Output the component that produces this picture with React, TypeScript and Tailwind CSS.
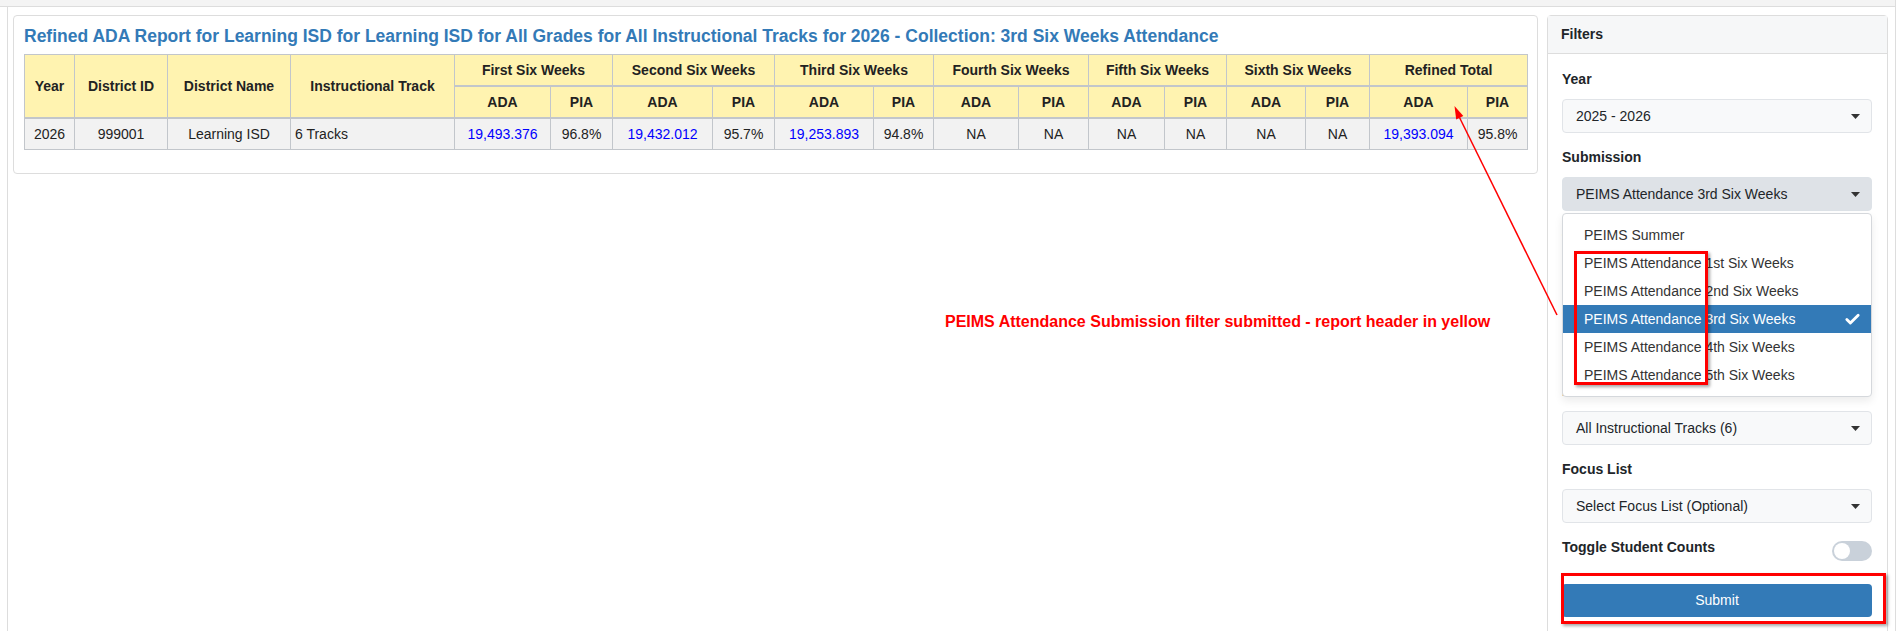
import { Check } from "lucide-react";

const periods = [
  "First Six Weeks",
  "Second Six Weeks",
  "Third Six Weeks",
  "Fourth Six Weeks",
  "Fifth Six Weeks",
  "Sixth Six Weeks",
  "Refined Total",
];

// ADA / PIA pairs, one per period
const row: [string, string][] = [
  ["19,493.376", "96.8%"],
  ["19,432.012", "95.7%"],
  ["19,253.893", "94.8%"],
  ["NA", "NA"],
  ["NA", "NA"],
  ["NA", "NA"],
  ["19,393.094", "95.8%"],
];

const cols = [
  "w-[50px]", "w-[93px]", "w-[123px]", "w-[164px]",
  "w-[96px]", "w-[62px]", "w-[100px]", "w-[62px]", "w-[99px]", "w-[60px]",
  "w-[85px]", "w-[70px]", "w-[76px]", "w-[62px]", "w-[79px]", "w-[64px]",
  "w-[98px]", "w-[60px]",
];

const submissions = [
  "PEIMS Summer",
  "PEIMS Attendance 1st Six Weeks",
  "PEIMS Attendance 2nd Six Weeks",
  "PEIMS Attendance 3rd Six Weeks",
  "PEIMS Attendance 4th Six Weeks",
  "PEIMS Attendance 5th Six Weeks",
];

const th = "border border-[#c2c6cb] border-b-2 bg-[#fff3b0] px-[4px] py-[5px] text-center font-bold text-[#222]";
const td = "border border-[#c2c6cb] bg-[#f2f2f2] px-[4px] py-[5px] text-center";

function Caret() {
  return (
    <svg width="9" height="5" viewBox="0 0 9 5" className="shrink-0">
      <polygon points="0,0 9,0 4.5,5" fill="#333" />
    </svg>
  );
}

function SelectBox({ value, active }: { value: string; active?: boolean }) {
  return (
    <div
      className={`flex h-[34px] w-full items-center justify-between rounded-[4px] border pl-[13px] pr-[11px] text-[14px] text-[#212529] ${
        active ? "border-[#dde2e7] bg-[#dee2e7]" : "border-[#e1e4e8] bg-[#f8f9fa]"
      }`}
    >
      <span>{value}</span>
      <Caret />
    </div>
  );
}

function Field({ label, children }: { label: string; children: React.ReactNode }) {
  return (
    <div className="mb-[14px]">
      <div className="mb-[10px] text-[14px] font-bold leading-[20px] text-[#212529]">{label}</div>
      {children}
    </div>
  );
}

function ReportCard() {
  return (
    <div className="w-[1525px] shrink-0 rounded-[4px] border border-[#dddddd] px-[10px] pt-[10px] pb-[23px]">
      <h2 className="mb-[8px] text-[17.5px] font-bold leading-[20px] text-[#337ab7]">
        Refined ADA Report for Learning ISD for Learning ISD for All Grades for All Instructional Tracks for 2026 -
        Collection: 3rd Six Weeks Attendance
      </h2>
      <table className="w-[1503px] table-fixed border-collapse text-[14px] leading-[20px] text-[#222]">
        <colgroup>
          {cols.map((c, i) => (
            <col key={i} className={c} />
          ))}
        </colgroup>
        <thead>
          <tr>
            <th rowSpan={2} className={th}>Year</th>
            <th rowSpan={2} className={th}>District ID</th>
            <th rowSpan={2} className={th}>District Name</th>
            <th rowSpan={2} className={th}>Instructional Track</th>
            {periods.map((p) => (
              <th key={p} colSpan={2} className={th}>
                {p}
              </th>
            ))}
          </tr>
          <tr>
            {periods.map((p) => [
              <th key={p + "a"} className={th}>ADA</th>,
              <th key={p + "p"} className={th}>PIA</th>,
            ])}
          </tr>
        </thead>
        <tbody>
          <tr>
            <td className={td}>2026</td>
            <td className={td}>999001</td>
            <td className={td}>Learning ISD</td>
            <td className={`${td} !text-left`}>6 Tracks</td>
            {row.map(([ada, pia], i) => [
              <td key={i + "a"} className={`${td} ${ada === "NA" ? "" : "text-[#0000ff]"}`}>
                {ada}
              </td>,
              <td key={i + "p"} className={td}>
                {pia}
              </td>,
            ])}
          </tr>
        </tbody>
      </table>
    </div>
  );
}

function Filters() {
  return (
    <div className="h-[700px] w-[341px] shrink-0 rounded-[4px] border border-[#dddddd]">
      <div className="flex h-[38px] items-center border-b border-[#dddddd] bg-[#f6f7f8] px-[13px] text-[14px] font-bold text-[#212529]">
        Filters
      </div>
      <div className="pt-[15px] pr-[15px] pl-[14px]">
        <Field label="Year">
          <SelectBox value="2025 - 2026" />
        </Field>
        <Field label="Submission">
          <div className="relative">
            <SelectBox value="PEIMS Attendance 3rd Six Weeks" active />
            <div className="absolute top-[36px] left-0 z-10 w-full rounded-[4px] border border-[#d5d8dc] bg-white py-[7px] shadow-[0_4px_8px_rgba(0,0,0,0.08)]">
              {submissions.map((s) => {
                const sel = s === "PEIMS Attendance 3rd Six Weeks";
                return (
                  <div
                    key={s}
                    className={`flex h-[28px] items-center justify-between pl-[21px] pr-[10px] text-[14px] ${
                      sel ? "bg-[#337ab7] text-white" : "text-[#333]"
                    }`}
                  >
                    <span>{s}</span>
                    {sel && <Check size={17} strokeWidth={4} />}
                  </div>
                );
              })}
            </div>
          </div>
        </Field>
        <Field label="Campus">
          <SelectBox value="All Campuses" />
        </Field>
        <Field label="Grade">
          <SelectBox value="All Grades" />
        </Field>
        <Field label="Instructional Track">
          <SelectBox value="All Instructional Tracks (6)" />
        </Field>
        <Field label="Focus List">
          <SelectBox value="Select Focus List (Optional)" />
        </Field>
        <div className="flex h-[24px] items-start justify-between">
          <span className="text-[14px] font-bold leading-[20px] text-[#212529]">Toggle Student Counts</span>
          <div className="mt-[4px] flex h-[20px] w-[40px] items-center rounded-full bg-[#c9d1da] px-[2px]">
            <div className="h-[16px] w-[16px] rounded-full bg-white" />
          </div>
        </div>
        <button className="mt-[23px] h-[33px] w-full rounded-[4px] bg-[#337ab7] text-[14px] text-white">
          Submit
        </button>
      </div>
    </div>
  );
}

export default function App() {
  return (
    <div className="relative h-[631px] w-[1896px] overflow-hidden border-r border-[#dddddd] bg-white font-['Liberation_Sans',Arial,sans-serif]">
      <div className="h-[7px] border-b border-[#dddddd] bg-[#f4f4f4]" />
      <div className="ml-[7px] flex items-start gap-[9px] border-l border-[#dddddd] pt-[8px] pl-[5px] pr-[7px]">
        <ReportCard />
        <Filters />
      </div>

      {/* annotation overlay */}
      <div className="absolute top-[312px] left-[945px] text-[16px] font-bold leading-[20px] text-[#ff0000]">
        PEIMS Attendance Submission filter submitted - report header in yellow
      </div>
      <svg className="pointer-events-none absolute inset-0 z-20" width="1896" height="631">
        <line x1="1557" y1="315" x2="1459.5" y2="117.5" stroke="#ff0000" strokeWidth="1.5" />
        <polygon points="1454.5,106 1463.3,115.9 1456.2,119.4" fill="#ff0000" />
      </svg>
      <div className="absolute top-[251px] left-[1574px] z-20 h-[134px] w-[134px] border-[3px] border-[#ff0000] shadow-[2px_2px_3px_rgba(0,0,0,0.35)]" />
      <div className="absolute top-[573px] left-[1561px] z-20 h-[51px] w-[325px] border-[3px] border-[#ff0000] shadow-[2px_2px_3px_rgba(0,0,0,0.35)]" />
    </div>
  );
}
